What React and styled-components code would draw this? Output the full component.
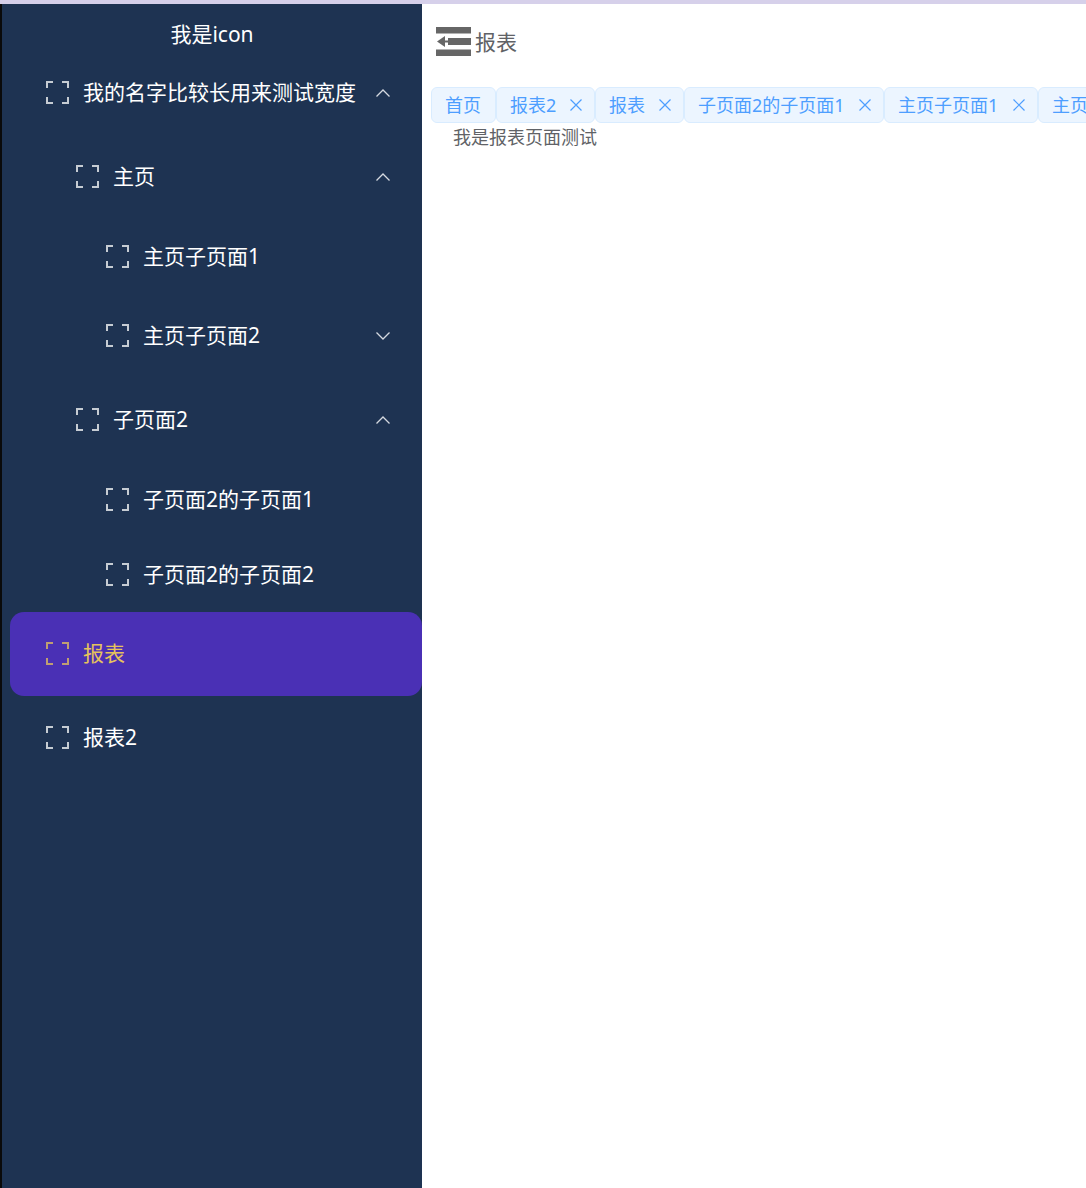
import React from "react";
import styled, { createGlobalStyle } from "styled-components";

const GlobalStyle = createGlobalStyle`
  html, body {
    margin: 0;
    padding: 0;
    background: #fff;
  }
  body {
    font-family: "Noto Sans", "Noto Sans CJK SC", sans-serif;
  }
`;

const Page = styled.div`
  width: 1086px;
  height: 1188px;
  display: flex;
  flex-direction: column;
  overflow: hidden;
`;

const TopStrip = styled.div`
  height: 4px;
  flex: none;
  background: #d6d0ea;
`;

const Layout = styled.div`
  flex: 1;
  display: flex;
  min-height: 0;
`;

const Sidebar = styled.aside`
  width: 420px;
  flex: none;
  border-left: 2px solid #0a0a0a;
  background: #1e3352;
  color: #fff;
`;

const Logo = styled.div`
  height: 47px;
  padding-top: 14px;
  box-sizing: border-box;
  text-align: center;
  font-size: 21px;
  line-height: 32px;
`;

const MenuRow = styled.div`
  height: ${props => props.height}px;
  margin-left: ${props => (props.active ? "8px" : "0")};
  padding-left: ${props => (props.active ? 36 + 30 * props.level : 44 + 30 * props.level)}px;
  padding-right: 31px;
  box-sizing: border-box;
  display: flex;
  align-items: center;
  font-size: 21px;
  color: ${props => (props.active ? "#e6c35c" : "#fff")};
  background: ${props => (props.active ? "#4a30b5" : "transparent")};
  border-radius: ${props => (props.active ? "14px" : "0")};
`;

const MenuLabel = styled.span`
  flex: 1;
  margin-left: 13px;
  margin-bottom: 2px;
  line-height: 30px;
  white-space: nowrap;
`;

const FrameSvg = styled.svg`
  flex: none;
  opacity: 0.75;
`;

const Main = styled.main`
  flex: 1;
  min-width: 0;
  padding-left: 9px;
  display: flex;
  flex-direction: column;
`;

const Header = styled.div`
  height: 83px;
  padding: 20px 0 0 5px;
  box-sizing: border-box;
  display: flex;
  align-items: flex-start;
`;

const HeaderTitle = styled.span`
  margin: 2px 0 0 4px;
  font-size: 21px;
  line-height: 32px;
  color: #606266;
`;

const TabBar = styled.div`
  display: flex;
  overflow: hidden;
  flex: none;
`;

const Tab = styled.div`
  flex: none;
  width: ${props => props.width}px;
  height: 36px;
  box-sizing: border-box;
  padding: 0 0 2px 13px;
  display: flex;
  align-items: center;
  border: 1px solid #d9ecff;
  border-radius: 6px;
  background: #ecf5ff;
  color: #4d9eff;
  font-size: 18px;
  white-space: nowrap;
`;

const TabClose = styled.svg`
  width: 14px;
  height: 14px;
  margin: 2px 11px 0 auto;
  flex: none;
`;

const PageText = styled.div`
  margin: 1px 0 0 22px;
  font-size: 18px;
  line-height: 26px;
  color: #606266;
`;

function FrameIcon() {
  return (
    <FrameSvg width="24" height="24" viewBox="0 0 24 24" fill="none" stroke="currentColor" strokeWidth="2">
      <path d="M1 7V1h6M16 1h6v6M1 16v6h6M16 22h6v-6" />
    </FrameSvg>
  );
}

const ChevronSvg = styled.svg`
  flex: none;
`;

function Chevron({ up }) {
  return (
    <ChevronSvg width="16" height="10" viewBox="0 0 16 10" fill="none" stroke="#d5d9e0" strokeWidth="1.3">
      <path d={up ? "M1.5 8.5 8 2l6.5 6.5" : "M1.5 1.5 8 8l6.5-6.5"} />
    </ChevronSvg>
  );
}

const CollapseSvg = styled.svg`
  flex: none;
  margin-top: 3px;
`;

function CollapseIcon() {
  return (
    <CollapseSvg width="35" height="29" viewBox="0 0 35 29" fill="#666">
      <rect width="35" height="6.5" />
      <rect x="12" y="11" width="23" height="7" />
      <rect y="22.5" width="35" height="6.5" />
      <path d="M1 14.5 9 9v11z" />
      <rect x="9" y="13.5" width="3" height="2" />
    </CollapseSvg>
  );
}

const menu = [
  { label: "我的名字比较长用来测试宽度", level: 0, height: 84, arrow: "up" },
  { label: "主页", level: 1, height: 84, arrow: "up" },
  { label: "主页子页面1", level: 2, height: 76 },
  { label: "主页子页面2", level: 2, height: 82, arrow: "down" },
  { label: "子页面2", level: 1, height: 86, arrow: "up" },
  { label: "子页面2的子页面1", level: 2, height: 74 },
  { label: "子页面2的子页面2", level: 2, height: 75 },
  { label: "报表", level: 0, height: 84, active: true },
  { label: "报表2", level: 0, height: 84 },
];

const tabs = [
  { label: "首页", width: 65, fixed: true },
  { label: "报表2", width: 99 },
  { label: "报表", width: 89 },
  { label: "子页面2的子页面1", width: 200 },
  { label: "主页子页面1", width: 154 },
  { label: "主页子页面2", width: 154 },
];

export default function App() {
  return (
    <Page>
      <GlobalStyle />
      <TopStrip />
      <Layout>
        <Sidebar>
          <Logo>我是icon</Logo>
          {menu.map(item => (
            <MenuRow key={item.label} level={item.level} height={item.height} active={item.active}>
              <FrameIcon />
              <MenuLabel>{item.label}</MenuLabel>
              {item.arrow ? <Chevron up={item.arrow === "up"} /> : null}
            </MenuRow>
          ))}
        </Sidebar>
        <Main>
          <Header>
            <CollapseIcon />
            <HeaderTitle>报表</HeaderTitle>
          </Header>
          <TabBar>
            {tabs.map(tab => (
              <Tab key={tab.label} width={tab.width}>
                {tab.label}
                {tab.fixed ? null : (
                  <TabClose viewBox="0 0 14 14" fill="none" stroke="#4d9eff" strokeWidth="1.2">
                    <path d="M1.5 1.5l11 11M12.5 1.5l-11 11" />
                  </TabClose>
                )}
              </Tab>
            ))}
          </TabBar>
          <PageText>我是报表页面测试</PageText>
        </Main>
      </Layout>
    </Page>
  );
}
